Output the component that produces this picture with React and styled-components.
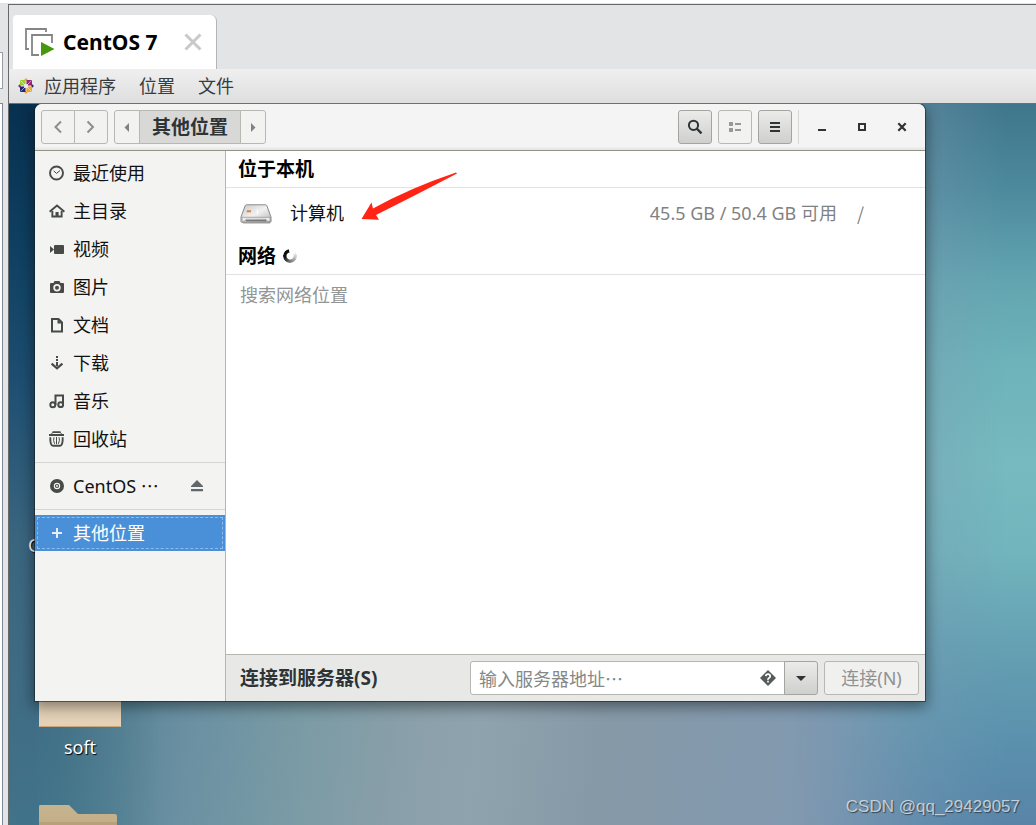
import React, { useState } from 'react'
import styled, { createGlobalStyle, css } from 'styled-components'

const GlobalStyle = createGlobalStyle`
  * {
    box-sizing: border-box;
  }
  body {
    margin: 0;
    font-family: 'Noto Sans', 'Noto Sans CJK SC', sans-serif;
    font-size: 18px;
    line-height: 26px;
    color: #111;
  }
  button, input {
    font: inherit;
    color: inherit;
    margin: 0;
  }
  svg {
    display: block;
    flex: none;
  }
`

const Page = styled.div`
  display: flex;
  min-height: 100vh;
  background: #e3e4e6;
  border-top: 3px solid white;
`
const Gutter = styled.div`
  display: flex;
  flex-direction: column;
  width: 8px;
  padding: 49px 5px 0 0;
`
const GutterTab = styled.div`
  height: 37px;
  margin-bottom: 14px;
  background: white;
  border: solid #9a9da3;
  border-width: 1px 1px 1px 0;
`
const GutterPanel = styled.div`
  flex: 1;
  background: white;
  border: solid #7f8896;
  border-width: 1px 1px 0 0;
`
const Machine = styled.main`
  display: flex;
  flex-direction: column;
  flex: 1;
  min-width: 0;
  margin-top: 1px;
  border: solid #66686a;
  border-width: 1px 0 0 1px;
`

const TabBar = styled.div`
  display: flex;
  padding: 10px 4px 0;
`
const Tab = styled.div`
  display: flex;
  align-items: center;
  gap: 8px;
  min-width: 204px;
  height: 54px;
  padding: 0 14px 0 12px;
  background: white;
  border-right: 1px solid #b4b5b7;
  border-radius: 4px 6px 0 0;
  font-size: 21px;
  font-weight: bold;
  color: black;
`
const TabClose = styled.button`
  margin-left: auto;
  padding: 0;
  border: 0;
  background: none;
`

const MenuBar = styled.nav`
  display: flex;
  align-items: center;
  gap: 23px;
  height: 35px;
  padding: 0 9px;
  background: linear-gradient(#efefef, #dedede);
  border-bottom: 1px solid #6f6f6f;
`
const MenuButton = styled.button`
  display: flex;
  align-items: center;
  gap: 10px;
  padding: 0;
  border: 0;
  background: none;
  color: #363d40;
`

const Desktop = styled.div`
  position: relative;
  display: flex;
  flex: 1;
  flex-direction: column;
  padding: 0 111px 124px 26px;
  overflow: hidden;
  background: linear-gradient(
    97deg,
    #3f6b83 0%,
    #52808f 12%,
    #6a90a2 23%,
    #7a9ba5 33%,
    #899fa9 42%,
    #8fa3ae 49%,
    #8699a7 60%,
    #8399ae 74%,
    #7f9ab2 84%,
    #7499b2 92%,
    #6a97b0 100%
  );

  &::before,
  &::after {
    content: '';
    position: absolute;
    top: 0;
    bottom: 0;
    width: 240px;
  }
  &::before {
    left: 0;
    background: linear-gradient(#08304f, #0f4061 20%, #1d4e71 38%, #3a657f 60%, #3f6b84 80%, #41738a);
    mask-image: linear-gradient(to right, black 20px, transparent 150px);
  }
  &::after {
    right: 0;
    background: linear-gradient(
      #3f768c,
      #4d8a9d 12%,
      #63a6b1 25%,
      #6db3b9 36%,
      #77babf 50%,
      #72b5bd 62%,
      #649fb2 76%,
      #5a8fac 90%,
      #5984a8
    );
    mask-image: linear-gradient(to left, black 30px, rgba(0, 0, 0, 0.65) 111px, transparent 240px);
  }
`
const DesktopItem = styled.div`
  position: absolute;
  top: ${props => props.$top}px;
  left: ${props => props.$left}px;
  z-index: 1;
  display: flex;
  flex-direction: column;
  align-items: center;
  gap: 6px;
  color: white;
  text-shadow: 1px 1px 1px black;
`
const Watermark = styled.div`
  position: absolute;
  right: 16px;
  bottom: 5px;
  z-index: 1;
  font-family: 'Liberation Sans', sans-serif;
  font-size: 17px;
  color: rgba(225, 230, 233, 0.8);
  text-shadow: 1px 1px 1px rgba(40, 50, 60, 0.8);
`

const Window = styled.section`
  position: relative;
  z-index: 2;
  display: flex;
  flex: 1;
  flex-direction: column;
  min-height: 480px;
  border-radius: 7px 7px 0 0;
  box-shadow: 0 0 0 1px rgba(20, 30, 35, 0.55), 0 4px 14px 2px rgba(0, 0, 0, 0.42);
  background: #f3f3f2;
`
const HeaderBar = styled.header`
  display: flex;
  align-items: center;
  gap: 6px;
  height: 47px;
  padding: 0 6px;
  background: linear-gradient(#f4f4f4 92%, #e4e4e3);
  border-bottom: 1px solid #92928b;
  border-radius: 7px 7px 0 0;
`
const raised = css`
  background: linear-gradient(#ebebea, #cfcfcd);
  border-color: #a5a5a0;
`
const Button = styled.button`
  display: flex;
  align-items: center;
  justify-content: center;
  width: ${props => props.$width || 34}px;
  height: 34px;
  padding: 0;
  border: 1px solid #b8b8b3;
  border-radius: 3px;
  background: #f2f2f1;
  color: #2e3436;
  ${props => props.$raised && raised}
`
const PathButton = styled(Button)`
  width: auto;
  padding: 0 12px;
  background: #d8d8d6;
  font-size: 19px;
  font-weight: bold;
`
const WindowButton = styled(Button)`
  border: 0;
  background: none;
`
const Linked = styled.div`
  display: flex;

  & > * + * {
    margin-left: -1px;
  }
  & > :not(:first-child) {
    border-top-left-radius: 0;
    border-bottom-left-radius: 0;
  }
  & > :not(:last-child) {
    border-top-right-radius: 0;
    border-bottom-right-radius: 0;
  }
`
const Spacer = styled.div`
  flex: 1;
`
const Divider = styled.div`
  width: 1px;
  height: 34px;
  background: #d6d6d4;
`

const Body = styled.div`
  display: flex;
  flex: 1;
`
const Sidebar = styled.nav`
  display: flex;
  flex-direction: column;
  width: 191px;
  padding-top: 3px;
  background: #f3f3f2;
  border-right: 1px solid #b6b6b1;
`
const PlaceRow = styled.div`
  display: flex;
  align-items: center;
  height: 36px;
  margin: 1px 0;
  padding: 0 20px 0 14px;
  color: #474a49;
  ${props =>
    props.$selected &&
    css`
      background: #4a90d9;
      color: white;
      outline: 1px dashed #8fbaeb;
      outline-offset: -3px;
    `}
`
const PlaceLink = styled.a`
  display: flex;
  flex: 1;
  align-items: center;
  gap: 8px;
  color: inherit;
  text-decoration: none;
  white-space: nowrap;
`
const PlaceName = styled.span`
  color: ${props => (props.$selected ? 'white' : '#111')};
`
const Ellipsis = styled.span`
  font-family: 'Noto Sans CJK SC', sans-serif;
  line-height: 1;
`
const EjectButton = styled.button`
  padding: 0;
  border: 0;
  background: none;
  color: #62676a;
`
const Rule = styled.hr`
  width: 100%;
  height: 1px;
  margin: 4px 0;
  border: 0;
  background: #d5d5d3;
`

const Content = styled.div`
  display: flex;
  flex: 1;
  flex-direction: column;
  min-width: 0;
`
const Places = styled.div`
  position: relative;
  flex: 1;
  background: white;
`
const GroupTitle = styled.h2`
  display: flex;
  align-items: center;
  gap: 7px;
  height: 37px;
  margin: 0;
  padding: 0 12px;
  border-bottom: 1px solid #e2e2e1;
  font-size: 19px;
  font-weight: bold;
  color: black;
`
const Volume = styled.div`
  display: flex;
  align-items: center;
  height: 50px;
  padding: 0 61px 0 14px;
  color: #7f8283;
`
const VolumeName = styled.span`
  flex: 1;
  margin-left: 18px;
  color: #111;
`
const MountPoint = styled.span`
  margin-left: 20px;
  font-family: 'Noto Sans CJK SC', sans-serif;
`
const Hint = styled.p`
  margin: 0;
  padding: 7px 14px;
  color: #929595;
`
const Spinner = styled.span`
  width: 14px;
  height: 14px;
  border-radius: 50%;
  background: conic-gradient(transparent 50deg, #ddd 80deg, #777 180deg, #111 260deg, #111 350deg, transparent 355deg);
  mask-image: radial-gradient(circle, transparent 3px, black 4px);
`
const Arrow = styled.svg`
  position: absolute;
  top: 20px;
  left: 134px;
`

const ConnectBar = styled.form`
  display: flex;
  align-items: center;
  gap: 6px;
  height: 47px;
  padding: 0 6px 0 14px;
  background: #e8e8e6;
  border-top: 1px solid #b6b6b1;
`
const ConnectLabel = styled.label`
  flex: 1;
  font-size: 19px;
  font-weight: bold;
  color: #2e3436;
  white-space: nowrap;
`
const AddressGroup = styled(Linked)`
  flex: 0 1 348px;
`
const AddressField = styled.div`
  display: flex;
  flex: 1;
  align-items: center;
  height: 34px;
  padding: 0 8px;
  background: white;
  border: 1px solid #b6b6b1;
  border-radius: 3px;
  color: #555a5a;
`
const AddressInput = styled.input`
  flex: 1;
  min-width: 0;
  padding: 0;
  border: 0;
  outline: 0;
  background: none;
  font-family: 'Noto Sans CJK SC', sans-serif;

  &::placeholder {
    color: #858888;
    opacity: 1;
  }
`
const ConnectButton = styled(Button)`
  background: #f0f0ef;
  color: #8f9292;
`

const Icon = ({ children, size = 16 }) => (
  <svg width={size} height={size} viewBox="0 0 16 16" fill="currentColor" aria-hidden="true">
    {children}
  </svg>
)

const icons = {
  recent: (
    <>
      <circle cx="7.5" cy="8" r="6.5" fill="none" stroke="currentColor" strokeWidth="1.9" />
      <path d="M4.6 5.8L7.5 8.4L11 5.6" fill="none" stroke="currentColor" strokeWidth="1" />
    </>
  ),
  home: (
    <>
      <path d="M.6 8.8L8 2.600l7.400 6.200" fill="none" stroke="currentColor" strokeWidth="2" />
      <path d="M2.400 8v6.400h11.200V8h-1.900v4.600H9.600V9H6.500v3.600H4.300V8z" />
    </>
  ),
  video: (
    <>
      <rect x="5" y="4" width="10" height="9" rx="1" />
      <path d="M1 5l4 3.500L1 12z" />
    </>
  ),
  pictures: (
    <path
      fillRule="evenodd"
      d="M5.500 2h5l1 2H14a1 1 0 0 1 1 1v8a1 1 0 0 1-1 1H2a1 1 0 0 1-1-1V5a1 1 0 0 1 1-1h2.500zM8 5a3.700 3.700 0 1 0 0 7.400A3.700 3.700 0 0 0 8 5zM8 6.700a2 2 0 1 1 0 4 2 2 0 0 1 0-4z"
    />
  ),
  documents: (
    <>
      <path d="M3 2h6.500l3.500 3.500V14.500H3z" fill="none" stroke="currentColor" strokeWidth="2" />
      <path d="M8.500 2v4.500H13z" />
    </>
  ),
  downloads: (
    <>
      <path d="M7 1h2v2H7zM7 4h2v2H7zM7 7h2v4H7z" />
      <path d="M2.600 8.600L8 13.400l5.400-4.800" fill="none" stroke="currentColor" strokeWidth="2.200" />
    </>
  ),
  music: (
    <>
      <path d="M6.500 12V2.500h7.500V11" fill="none" stroke="currentColor" strokeWidth="2" />
      <circle cx="3.800" cy="11.700" r="2.500" fill="none" stroke="currentColor" strokeWidth="2" />
      <circle cx="11.700" cy="11.700" r="2.400" fill="none" stroke="currentColor" strokeWidth="2" />
    </>
  ),
  trash: (
    <g fill="none" stroke="currentColor">
      <path d="M0 4h15M3.500 1.200h8" strokeWidth="1.800" />
      <path d="M2 3.500l2-2.300M13 3.500l-2-2.300" />
      <path d="M1.300 6.300c-.2 6 .9 8.400 2.700 8.400h7c1.800 0 2.900-2.400 2.700-8.400" strokeWidth="1.900" />
      <path d="M5 6.200q-1.200 3.300.6 6.600M7.500 6v7.200M10 6.200q1.200 3.300-.6 6.600" />
    </g>
  ),
  disc: (
    <path
      fillRule="evenodd"
      d="M8 1a7 7 0 1 0 0 14A7 7 0 0 0 8 1zM8 4.800a3.200 3.200 0 1 1 0 6.400 3.200 3.200 0 0 1 0-6.400zM8 5.900a2.100 2.100 0 1 0 0 4.200 2.100 2.100 0 0 0 0-4.200zM8 7a1 1 0 1 1 0 2 1 1 0 0 1 0-2z"
    />
  ),
  add: <path d="M7 3h2v4h4v2H9v4H7V9H3V7h4z" opacity=".85" />,
  eject: <path d="M8 2l6 6v1H2V8zM2 11h12v2.200H2z" />,
  back: <path d="M11 2.500L5.500 8l5.500 5.500" fill="none" stroke="#8b8e8f" strokeWidth="2" />,
  forward: <path d="M4.500 2.500L10 8l-5.500 5.500" fill="none" stroke="#8b8e8f" strokeWidth="2" />,
  pathBack: <path d="M10 4v9L5.500 8.500z" fill="#7f8283" />,
  pathForward: <path d="M6 4v9l4.500-4.500z" fill="#7f8283" />,
  search: (
    <g fill="none" stroke="currentColor">
      <circle cx="6.500" cy="6.300" r="4.600" strokeWidth="2" />
      <path d="M9.700 9.500l4.800 4.800" strokeWidth="2.400" />
    </g>
  ),
  list: <path d="M2 3h4v4H2zM8 4h6v2H8zM2 9h4v4H2zM8 10h6v2H8z" fill="#96999a" />,
  menu: <path d="M3 3h10v2H3zM3 7h10v2H3zM3 11h10v2H3z" />,
  minimize: <path d="M4 10h8v2H4z" />,
  maximize: <path fillRule="evenodd" d="M4 4h8v8H4zM6 6v4h4V6z" />,
  close: <path d="M4.300 4.300l7.400 7.400M11.700 4.300l-7.400 7.400" stroke="currentColor" strokeWidth="2.200" />,
  down: <path d="M3 6h10L8 11z" />,
  help: (
    <>
      <path d="M8 0l8 8-8 8-8-8z" />
      <path d="M5.800 6.200Q6 4.200 8 4.200T10.200 6.200Q10.200 7.300 9 7.900T8 9.800M8 10.800v1.800" fill="none" stroke="white" strokeWidth="1.700" />
    </>
  )
}

const VmIcon = () => (
  <svg width="30" height="28" viewBox="0 0 30 28" aria-hidden="true">
    <g fill="none" stroke="#858585" strokeWidth="1.800">
      <path d="M21 4V1H1v20h3" />
      <path d="M27 15V7H7v20h7" />
    </g>
    <path d="M16 14l13.500 7L16 28z" fill="#45980f" />
  </svg>
)

const CentosLogo = () => (
  <svg width="16" height="16" viewBox="0 0 16 16" aria-hidden="true">
    <path d="M8 0l2.500 2.700h-5zM8 16l2.500-2.700h-5z" fill="#efa724" />
    <path d="M0 8l2.700-2.500v5z" fill="#932279" />
    <path d="M16 8l-2.700-2.500v5z" fill="#262577" />
    <path d="M2 2h5.500v5.500H2z" fill="#9ccd2a" />
    <path d="M8.500 2H14v5.500H8.500z" fill="#932279" />
    <path d="M2 8.500h5.500V14H2z" fill="#262577" />
    <path d="M8.500 8.500H14V14H8.500z" fill="#efa724" />
    <path d="M2.500 2.500l11 11M13.500 2.500l-11 11" stroke="white" strokeOpacity=".6" strokeWidth=".9" />
    <path d="M6 6h4v4H6z" fill="#ededed" fillOpacity=".8" />
  </svg>
)

const DriveIcon = () => (
  <svg width="32" height="32" viewBox="0 0 32 32" aria-hidden="true">
    <defs>
      <linearGradient id="drive-top" x1="0" y1="0" x2="1" y2="1">
        <stop offset="0" stopColor="#c9c9c9" />
        <stop offset=".5" stopColor="#f1f1f1" />
        <stop offset="1" stopColor="#b4b4b4" />
      </linearGradient>
    </defs>
    <path d="M3 26.200h27" stroke="#000" strokeOpacity=".2" strokeWidth="1.500" />
    <path d="M6.500 7.800h19q1 0 1.400 1L31 20V24.500q0 .8-1 .8H2q-1 0-1-.8V20L5.100 8.800q.4-1 1.400-1z" fill="url(#drive-top)" stroke="#8a8a8a" />
    <path d="M2 20.300h28v4h-3l-1-2H6l-1 2H2z" fill="#ededed" stroke="#8c8c8c" strokeWidth=".7" />
    <path d="M6 23h20l.5 1.500h-21z" fill="#777" />
    <path d="M7 13.300h4v2H6.500z" fill="#d9853b" />
    <path d="M17.500 12.500v5" stroke="white" strokeWidth="1.200" />
  </svg>
)

const Folder = ({ width, from, to, edge }) => (
  <svg width={width} height="76" viewBox={`0 0 ${width} 76`} aria-hidden="true">
    <defs>
      <linearGradient id={`folder-${from}`} x1="0" y1="0" x2="0" y2="1">
        <stop offset="0" stopColor={`#${from}`} />
        <stop offset="1" stopColor={`#${to}`} />
      </linearGradient>
    </defs>
    <path d={`M2 0h29l9 9H${width - 3}q2 0 2 2v63H1V2q0-2 1-2z`} fill={`url(#folder-${from})`} />
    <path d={`M1 17h${width - 2}v57q0 1-1 1H2q-1 0-1-1z`} fill={`#${to}`} />
    <path d={`M2 74.500h${width - 4}`} stroke={edge} />
  </svg>
)

const places = [
  { icon: 'recent', name: '最近使用' },
  { icon: 'home', name: '主目录' },
  { icon: 'video', name: '视频' },
  { icon: 'pictures', name: '图片' },
  { icon: 'documents', name: '文档' },
  { icon: 'downloads', name: '下载' },
  { icon: 'music', name: '音乐' },
  { icon: 'trash', name: '回收站' }
]

const Place = ({ icon, name, selected, onSelect, children }) => (
  <PlaceRow $selected={selected}>
    <PlaceLink href="#" onClick={onSelect}>
      <Icon>{icons[icon]}</Icon>
      <PlaceName $selected={selected}>{name}</PlaceName>
    </PlaceLink>
    {children}
  </PlaceRow>
)

const FileManager = () => {
  const [current, setCurrent] = useState('add')
  const [address, setAddress] = useState('')

  const select = icon => ({
    selected: current === icon,
    onSelect: e => {
      e.preventDefault()
      setCurrent(icon)
    }
  })

  return (
    <Window>
      <HeaderBar>
        <Linked>
          <Button aria-label="后退"><Icon>{icons.back}</Icon></Button>
          <Button aria-label="前进"><Icon>{icons.forward}</Icon></Button>
        </Linked>
        <Linked>
          <Button $width={26} aria-label="上一级"><Icon>{icons.pathBack}</Icon></Button>
          <PathButton>其他位置</PathButton>
          <Button $width={26} aria-label="下一级"><Icon>{icons.pathForward}</Icon></Button>
        </Linked>
        <Spacer />
        <Button $raised aria-label="搜索"><Icon>{icons.search}</Icon></Button>
        <Button aria-label="列表视图"><Icon>{icons.list}</Icon></Button>
        <Button $raised aria-label="菜单"><Icon>{icons.menu}</Icon></Button>
        <Divider />
        <WindowButton aria-label="最小化"><Icon>{icons.minimize}</Icon></WindowButton>
        <WindowButton aria-label="最大化"><Icon>{icons.maximize}</Icon></WindowButton>
        <WindowButton aria-label="关闭"><Icon>{icons.close}</Icon></WindowButton>
      </HeaderBar>
      <Body>
        <Sidebar>
          {places.map(place => (
            <Place key={place.icon} {...place} {...select(place.icon)} />
          ))}
          <Rule />
          <Place icon="disc" name={<>CentOS <Ellipsis>…</Ellipsis></>} {...select('disc')}>
            <EjectButton aria-label="弹出"><Icon>{icons.eject}</Icon></EjectButton>
          </Place>
          <Rule />
          <Place icon="add" name="其他位置" {...select('add')} />
        </Sidebar>
        <Content>
          <Places>
            <GroupTitle>位于本机</GroupTitle>
            <Volume>
              <DriveIcon />
              <VolumeName>计算机</VolumeName>
              <span>45.5 GB / 50.4 GB 可用</span>
              <MountPoint>/</MountPoint>
            </Volume>
            <GroupTitle>网络 <Spinner /></GroupTitle>
            <Hint>搜索网络位置</Hint>
            <Arrow width="98" height="52" viewBox="0 0 98 52" aria-hidden="true">
              <path d="M1.500 48L11.500 31.500L13 37.500Q50 17 96 1.500L97 2.500Q58 23 16 44L19 48.700Z" fill="#ff2414" />
            </Arrow>
          </Places>
          <ConnectBar onSubmit={e => e.preventDefault()}>
            <ConnectLabel htmlFor="address">连接到服务器(S)</ConnectLabel>
            <AddressGroup>
              <AddressField>
                <AddressInput
                  id="address"
                  placeholder="输入服务器地址…"
                  value={address}
                  onChange={e => setAddress(e.target.value)}
                />
                <Icon>{icons.help}</Icon>
              </AddressField>
              <Button type="button" $raised aria-label="最近的服务器"><Icon>{icons.down}</Icon></Button>
            </AddressGroup>
            <ConnectButton $width={95} disabled={!address}>连接(N)</ConnectButton>
          </ConnectBar>
        </Content>
      </Body>
    </Window>
  )
}

const App = () => (
  <>
    <GlobalStyle />
    <Page lang="zh-CN">
      <Gutter>
        <GutterTab />
        <GutterPanel />
      </Gutter>
      <Machine>
        <TabBar>
          <Tab>
            <VmIcon />
            CentOS 7
            <TabClose aria-label="关闭标签页">
              <svg width="18" height="18" viewBox="0 0 18 18" aria-hidden="true">
                <path d="M1.500 1.500l15 15M16.500 1.500l-15 15" stroke="#c9c9c9" strokeWidth="3" />
              </svg>
            </TabClose>
          </Tab>
        </TabBar>
        <MenuBar>
          <MenuButton><CentosLogo />应用程序</MenuButton>
          <MenuButton>位置</MenuButton>
          <MenuButton>文件</MenuButton>
        </MenuBar>
        <Desktop>
          <DesktopItem $top={428} $left={19}>C</DesktopItem>
          <DesktopItem $top={548} $left={29}>
            <Folder width={84} from="e0cdb2" to="e4d1b6" edge="#c9a77c" />
            <span>soft</span>
          </DesktopItem>
          <DesktopItem $top={701} $left={29}>
            <Folder width={80} from="c6b48f" to="b8a179" edge="#a08a60" />
          </DesktopItem>
          <FileManager />
          <Watermark>CSDN @qq_29429057</Watermark>
        </Desktop>
      </Machine>
    </Page>
  </>
)

export default App
